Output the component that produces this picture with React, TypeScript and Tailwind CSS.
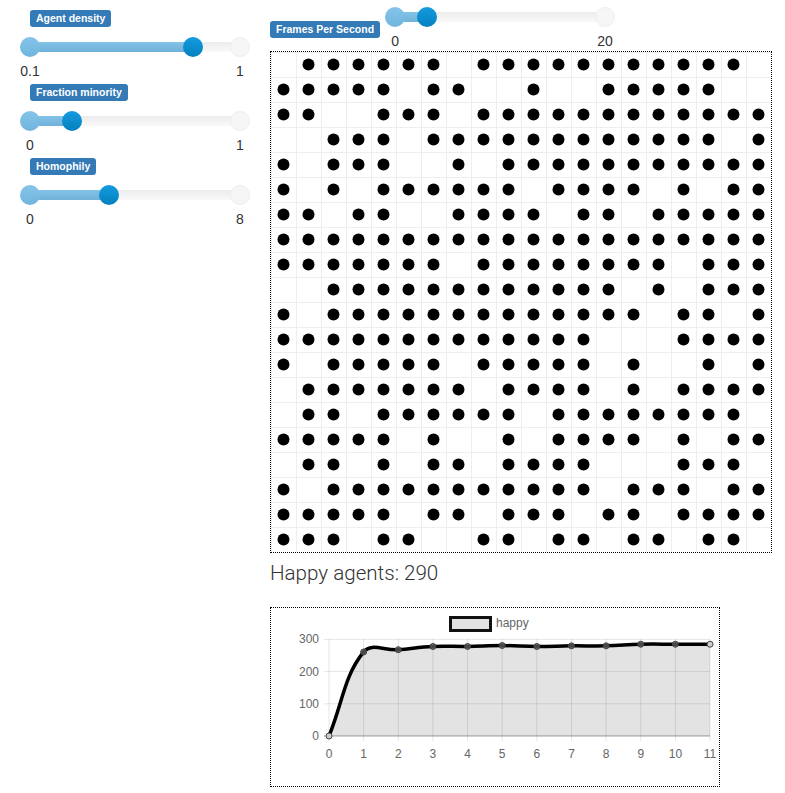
const GRID = [
  '.XXXXXX.XXXXXXXXXXX.',
  'XXXXX.XX..X..XXXXX..',
  'XX..XXX.XXXXXXXXXXXX',
  '..XXX.XXXXXXXXXXXX.X',
  'X.XXX..X.XXXXXXXXXXX',
  'X.X.XXXXXX.XXXX.X.XX',
  'XX.XX..XXXX.XX.XXXXX',
  'XXXXXXXXXXXXXXXXXXXX',
  'XXXXXXX.XXXXXXXX.XXX',
  '..XXXXXXXXXXXX.X.XXX',
  'X.XXXXXXXXXXXXX.XX.X',
  'XXXXXXXXXXXXX...XXXX',
  'X.XXXXX.XXXXX.X..X.X',
  '.XXXXXXX.XXXX.X.XXXX',
  '.XX.XXXXXX.XXXXXXXX.',
  'XXXXX.X..X.XXXX.X.XX',
  '.XX.X.XX.XXXX...XXX.',
  'X.XXXXXXXXXXX.XXX.XX',
  'XXXXX.XX.XXX.XX.XXXX',
  'XXX.XX..XX.XX.XX.XX.',
];

const happy = [0, 261, 268, 278, 278, 281, 278, 280, 280, 285, 285, 285];

const xAt = (i: number) => 58 + i * 34.64;
const yAt = (v: number) => 128 - v * 0.322;

// same spline chart.js uses for tension 0.4
const linePath = (data: number[]) => {
  const pts = data.map((v, i) => ({ x: xAt(i), y: yAt(v) }));
  const ctrl = pts.map((p, i) => {
    const prev = pts[Math.max(i - 1, 0)];
    const next = pts[Math.min(i + 1, pts.length - 1)];
    const d01 = Math.hypot(p.x - prev.x, p.y - prev.y);
    const d12 = Math.hypot(next.x - p.x, next.y - p.y);
    const total = d01 + d12 || 1;
    const fa = (0.4 * d01) / total;
    const fb = (0.4 * d12) / total;
    return {
      px: p.x - fa * (next.x - prev.x),
      py: p.y - fa * (next.y - prev.y),
      nx: p.x + fb * (next.x - prev.x),
      ny: p.y + fb * (next.y - prev.y),
    };
  });
  let d = `M${pts[0].x} ${pts[0].y}`;
  for (let i = 1; i < pts.length; i++) {
    d += ` C${ctrl[i - 1].nx} ${ctrl[i - 1].ny} ${ctrl[i].px} ${ctrl[i].py} ${pts[i].x} ${pts[i].y}`;
  }
  return d;
};

const Badge = ({ text }: { text: string }) => (
  <div className="w-fit rounded-[3px] bg-[#337ab7] px-[6px] text-[10.5px] font-bold leading-[17px] text-white">
    {text}
  </div>
);

const Slider = ({ pos, min, max }: { pos: number; min: string; max: string }) => (
  <div className="w-full">
    <div className="relative h-5">
      <div className="absolute inset-x-0 top-[5px] h-[10px] bg-gradient-to-b from-[#ececec] to-[#f9f9f9]" />
      <div
        className="absolute left-0 top-[5px] h-[10px] bg-gradient-to-b from-[#85c3e8] to-[#6fb1d9]"
        style={{ width: pos }}
      />
      <div className="absolute left-[-10px] top-0 size-5 rounded-full bg-gradient-to-b from-[#85c4ea] to-[#70b5dd]" />
      <div className="absolute right-[-10px] top-0 size-5 rounded-full border border-[#efefef] bg-[#f6f6f6]" />
      <div
        className="absolute top-0 size-5 -translate-x-1/2 rounded-full bg-gradient-to-b from-[#149bdf] to-[#0480be]"
        style={{ left: pos }}
      />
    </div>
    <div className="mt-1 flex justify-between text-sm leading-5 text-[#333]">
      <span className="flex w-0 justify-center">{min}</span>
      <span className="flex w-0 justify-center">{max}</span>
    </div>
  </div>
);

const Setting = ({ label, pos, min, max }: { label: string; pos: number; min: string; max: string }) => (
  <div className="h-[74px] px-[30px]">
    <Badge text={label} />
    <div className="mt-[10px]">
      <Slider pos={pos} min={min} max={max} />
    </div>
  </div>
);

const Chart = () => {
  const curve = linePath(happy);
  return (
    <svg width="448" height="178" className="block" fontFamily="'Liberation Sans', sans-serif" fontSize="12" fill="#666">
      <rect x="179.5" y="9.5" width="40" height="13" fill="#e3e3e3" stroke="#111" strokeWidth="3" />
      <text x="225" y="19">happy</text>
      {happy.map((_, i) => (
        <line key={i} x1={xAt(i)} x2={xAt(i)} y1="31" y2="133" stroke="#000" strokeOpacity="0.1" />
      ))}
      {[0, 100, 200, 300].map((v) => (
        <g key={v}>
          <line x1="53" x2={xAt(11)} y1={yAt(v)} y2={yAt(v)} stroke="#000" strokeOpacity={v === 0 ? 0.18 : 0.1} strokeWidth={v === 0 ? 2 : 1} />
          <text x="48" y={yAt(v) + 4} textAnchor="end">{v}</text>
        </g>
      ))}
      <path d={`${curve} L${xAt(11)} ${yAt(0)} L${xAt(0)} ${yAt(0)} Z`} fill="#000" fillOpacity="0.11" />
      <path d={curve} fill="none" stroke="#000" strokeWidth="3.5" />
      {happy.map((v, i) => {
        const end = i === 0 || i === happy.length - 1;
        return (
          <circle
            key={i}
            cx={xAt(i)}
            cy={yAt(v)}
            r="3"
            fill={end ? '#ccc' : '#555'}
            fillOpacity={end ? 1 : 0.85}
            stroke="#444"
          />
        );
      })}
      {happy.map((_, i) => (
        <text key={i} x={xAt(i)} y="149.5" textAnchor="middle">{i}</text>
      ))}
    </svg>
  );
};

export default function App() {
  return (
    <div className="flex font-['Liberation_Sans',sans-serif]">
      <div className="w-[270px] shrink-0 pt-[10px]">
        <Setting label="Agent density" pos={163} min="0.1" max="1" />
        <Setting label="Fraction minority" pos={42} min="0" max="1" />
        <Setting label="Homophily" pos={79} min="0" max="8" />
      </div>
      <div className="w-[502px]">
        <div className="flex h-[51px] items-start">
          <div className="pt-[21px]">
            <Badge text="Frames Per Second" />
          </div>
          <div className="ml-[15px] mt-[7px] w-[210px]">
            <Slider pos={32} min="0" max="20" />
          </div>
        </div>
        <div className="w-[502px] border border-dotted border-black">
          <div className="grid grid-cols-[repeat(20,25px)]">
            {GRID.flatMap((row, r) =>
              row.split('').map((c, i) => (
                <div key={`${r}-${i}`} className="flex h-[25px] items-center justify-center border-l border-t border-[#eee]">
                  {c === 'X' && <div className="size-3 -translate-x-[0.5px] -translate-y-[0.5px] rounded-full bg-black" />}
                </div>
              )),
            )}
          </div>
        </div>
        <p className="mt-2 font-['Roboto',sans-serif] text-[20.6px] font-light leading-[24px] text-[#333]">Happy agents: 290</p>
        <div className="mt-[22px] w-[450px] border border-dotted border-black">
          <Chart />
        </div>
      </div>
    </div>
  );
}
